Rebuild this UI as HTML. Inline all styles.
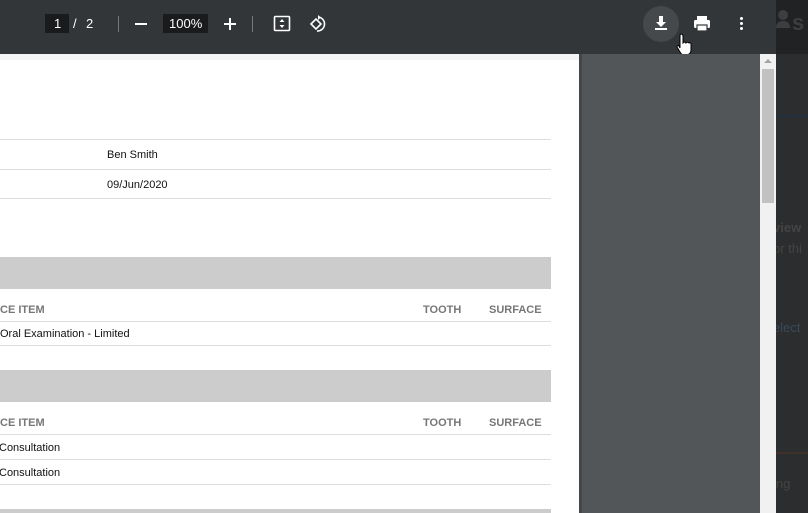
<!DOCTYPE html>
<html><head><style>
body{margin:0;width:808px;height:513px;overflow:hidden;position:relative;background:#2b2d2f;font-family:"Liberation Sans",Arial,sans-serif}
.a{position:absolute}
.tb{left:0;top:0;width:776px;height:54px;background:#323639;color:#fff}
.page{left:0;top:54px;width:579px;height:459px;background:#fff}
.gray{left:579px;top:54px;width:181px;height:459px;background:#525659}
.sb{left:760px;top:54px;width:16px;height:459px;background:#f1f1f1}
.line{height:1px;background:#ddd;left:0;width:551px}
.bar{background:#cccccc;left:0;width:551px}
.t{font-size:11px;color:#111}
.h{font-size:11px;font-weight:bold;color:#777}
.ft{color:#555;font-size:13px}
</style></head><body>
<div class="a tb">
 <div class="a" style="left:45px;top:14px;width:24px;height:19px;background:#191b1c"></div>
 <div class="a" style="left:54px;top:16px;font-size:13px">1</div>
 <div class="a" style="left:73px;top:16px;font-size:13px">/</div>
 <div class="a" style="left:86px;top:16px;font-size:13px">2</div>
 <div class="a" style="left:118px;top:16px;width:1px;height:16px;background:#777"></div>
 <div class="a" style="left:135px;top:23px;width:12px;height:2px;background:#fff"></div>
 <div class="a" style="left:163px;top:14px;width:45px;height:19px;background:#191b1c"></div>
 <div class="a" style="left:169px;top:16px;font-size:13px">100%</div>
 <div class="a" style="left:224px;top:23px;width:12px;height:2px;background:#fff"></div>
 <div class="a" style="left:229px;top:18px;width:2px;height:12px;background:#fff"></div>
 <div class="a" style="left:252px;top:16px;width:1px;height:16px;background:#777"></div>
 <svg class="a" style="left:273px;top:15px" width="18" height="18" viewBox="0 0 18 18"><rect x="1.5" y="1.5" width="15" height="14" fill="none" stroke="#fff" stroke-width="1.6" rx="1"/><path d="M9 4l-2.5 3h5zM9 13l-2.5-3h5z" fill="#fff"/></svg>
 <svg class="a" style="left:309px;top:14px" width="20" height="20" viewBox="0 0 20 20"><path d="M2 10l5-5 5 5-5 5z" fill="none" stroke="#fff" stroke-width="1.6"/><path d="M9 3a7 7 0 1 1 -1 14" fill="none" stroke="#fff" stroke-width="1.6"/><path d="M9 1v5l3-2.5z" fill="#fff"/></svg>
 <div class="a" style="left:643px;top:6px;width:36px;height:36px;border-radius:50%;background:#45494c"></div>
 <svg class="a" style="left:653px;top:15px" width="16" height="16" viewBox="0 0 16 16"><path d="M6 1h4v6h3l-5 5-5-5h3z" fill="#fff"/><rect x="2" y="13" width="12" height="2" fill="#fff"/></svg>
 <svg class="a" style="left:693px;top:15px" width="18" height="17" viewBox="0 0 18 17"><rect x="4" y="1" width="10" height="4" fill="#fff"/><rect x="1" y="5" width="16" height="8" rx="1.5" fill="#fff"/><rect x="4" y="10" width="10" height="6" fill="#fff" stroke="#323639" stroke-width="1.2"/></svg>
 <div class="a" style="left:740px;top:17px;width:3px;height:3px;border-radius:50%;background:#fff;box-shadow:0 5px 0 #fff,0 10px 0 #fff"></div>
 <svg class="a" style="left:676px;top:32px" width="18" height="24" viewBox="0 0 18 24"><path d="M5 2c1 0 2 1 2 2v7l1-1c1 0 2 0 2 1 1-1 2-1 3 0 1-.5 2 0 2 1v6c0 3-2 5-5 5H8c-2 0-3-1-4-3l-3-5c0-1 1-2 2-1l1 2V4c0-1 0-2 1-2z" fill="#fff" stroke="#000" stroke-width="1"/></svg>
</div>
<div class="a" style="left:776px;top:0;width:32px;height:54px;background:#202224"></div>
<svg class="a" style="left:776px;top:9px" width="14" height="20" viewBox="0 0 14 20"><circle cx="7" cy="6" r="5" fill="#3c3e40"/><path d="M0 19c0-5 3-7 7-7s7 2 7 7z" fill="#3c3e40"/></svg>
<div class="a" style="left:792px;top:10px;font-size:22px;color:#3c3e40;font-weight:bold">s</div>
<div class="a" style="left:776px;top:115px;width:32px;height:2px;background:#203040"></div>
<div class="a ft" style="left:773px;top:220px;font-weight:bold;color:#444">view</div>
<div class="a ft" style="left:773px;top:241px;color:#444">or thi</div>
<div class="a ft" style="left:773px;top:320px;color:#3a4a5a">elect</div>
<div class="a" style="left:776px;top:452px;width:32px;height:2px;background:#40302a"></div>
<div class="a ft" style="left:773px;top:476px;color:#444">ing</div>
<div class="a page">
 <div class="a" style="left:0;top:0;width:579px;height:6px;background:#f4f4f4"></div>
</div>
<div class="a line" style="top:139px"></div>
<div class="a line" style="top:169px"></div>
<div class="a line" style="top:198px"></div>
<div class="a t" style="left:107px;top:149px">Ben Smith</div>
<div class="a t" style="left:107px;top:179px">09/Jun/2020</div>
<div class="a bar" style="top:257px;height:32px"></div>
<div class="a h" style="left:0;top:304px">CE ITEM</div>
<div class="a h" style="left:423px;top:304px">TOOTH</div>
<div class="a h" style="left:489px;top:304px">SURFACE</div>
<div class="a line" style="top:321px"></div>
<div class="a t" style="left:0;top:328px">Oral Examination - Limited</div>
<div class="a line" style="top:345px"></div>
<div class="a bar" style="top:370px;height:32px"></div>
<div class="a h" style="left:0;top:417px">CE ITEM</div>
<div class="a h" style="left:423px;top:417px">TOOTH</div>
<div class="a h" style="left:489px;top:417px">SURFACE</div>
<div class="a line" style="top:434px"></div>
<div class="a t" style="left:-1px;top:442px">Consultation</div>
<div class="a line" style="top:459px"></div>
<div class="a t" style="left:-1px;top:467px">Consultation</div>
<div class="a line" style="top:484px"></div>
<div class="a bar" style="top:509px;height:4px"></div>
<div class="a gray"></div>
<div class="a" style="left:579px;top:54px;width:3px;height:459px;background:#444749"></div>
<div class="a sb">
 <div class="a" style="left:4px;top:5px;width:0;height:0;border-left:4px solid transparent;border-right:4px solid transparent;border-bottom:4px solid #a3a3a3"></div>
 <div class="a" style="left:2px;top:15px;width:12px;height:134px;background:#c1c1c1"></div>
</div>
</body></html>
